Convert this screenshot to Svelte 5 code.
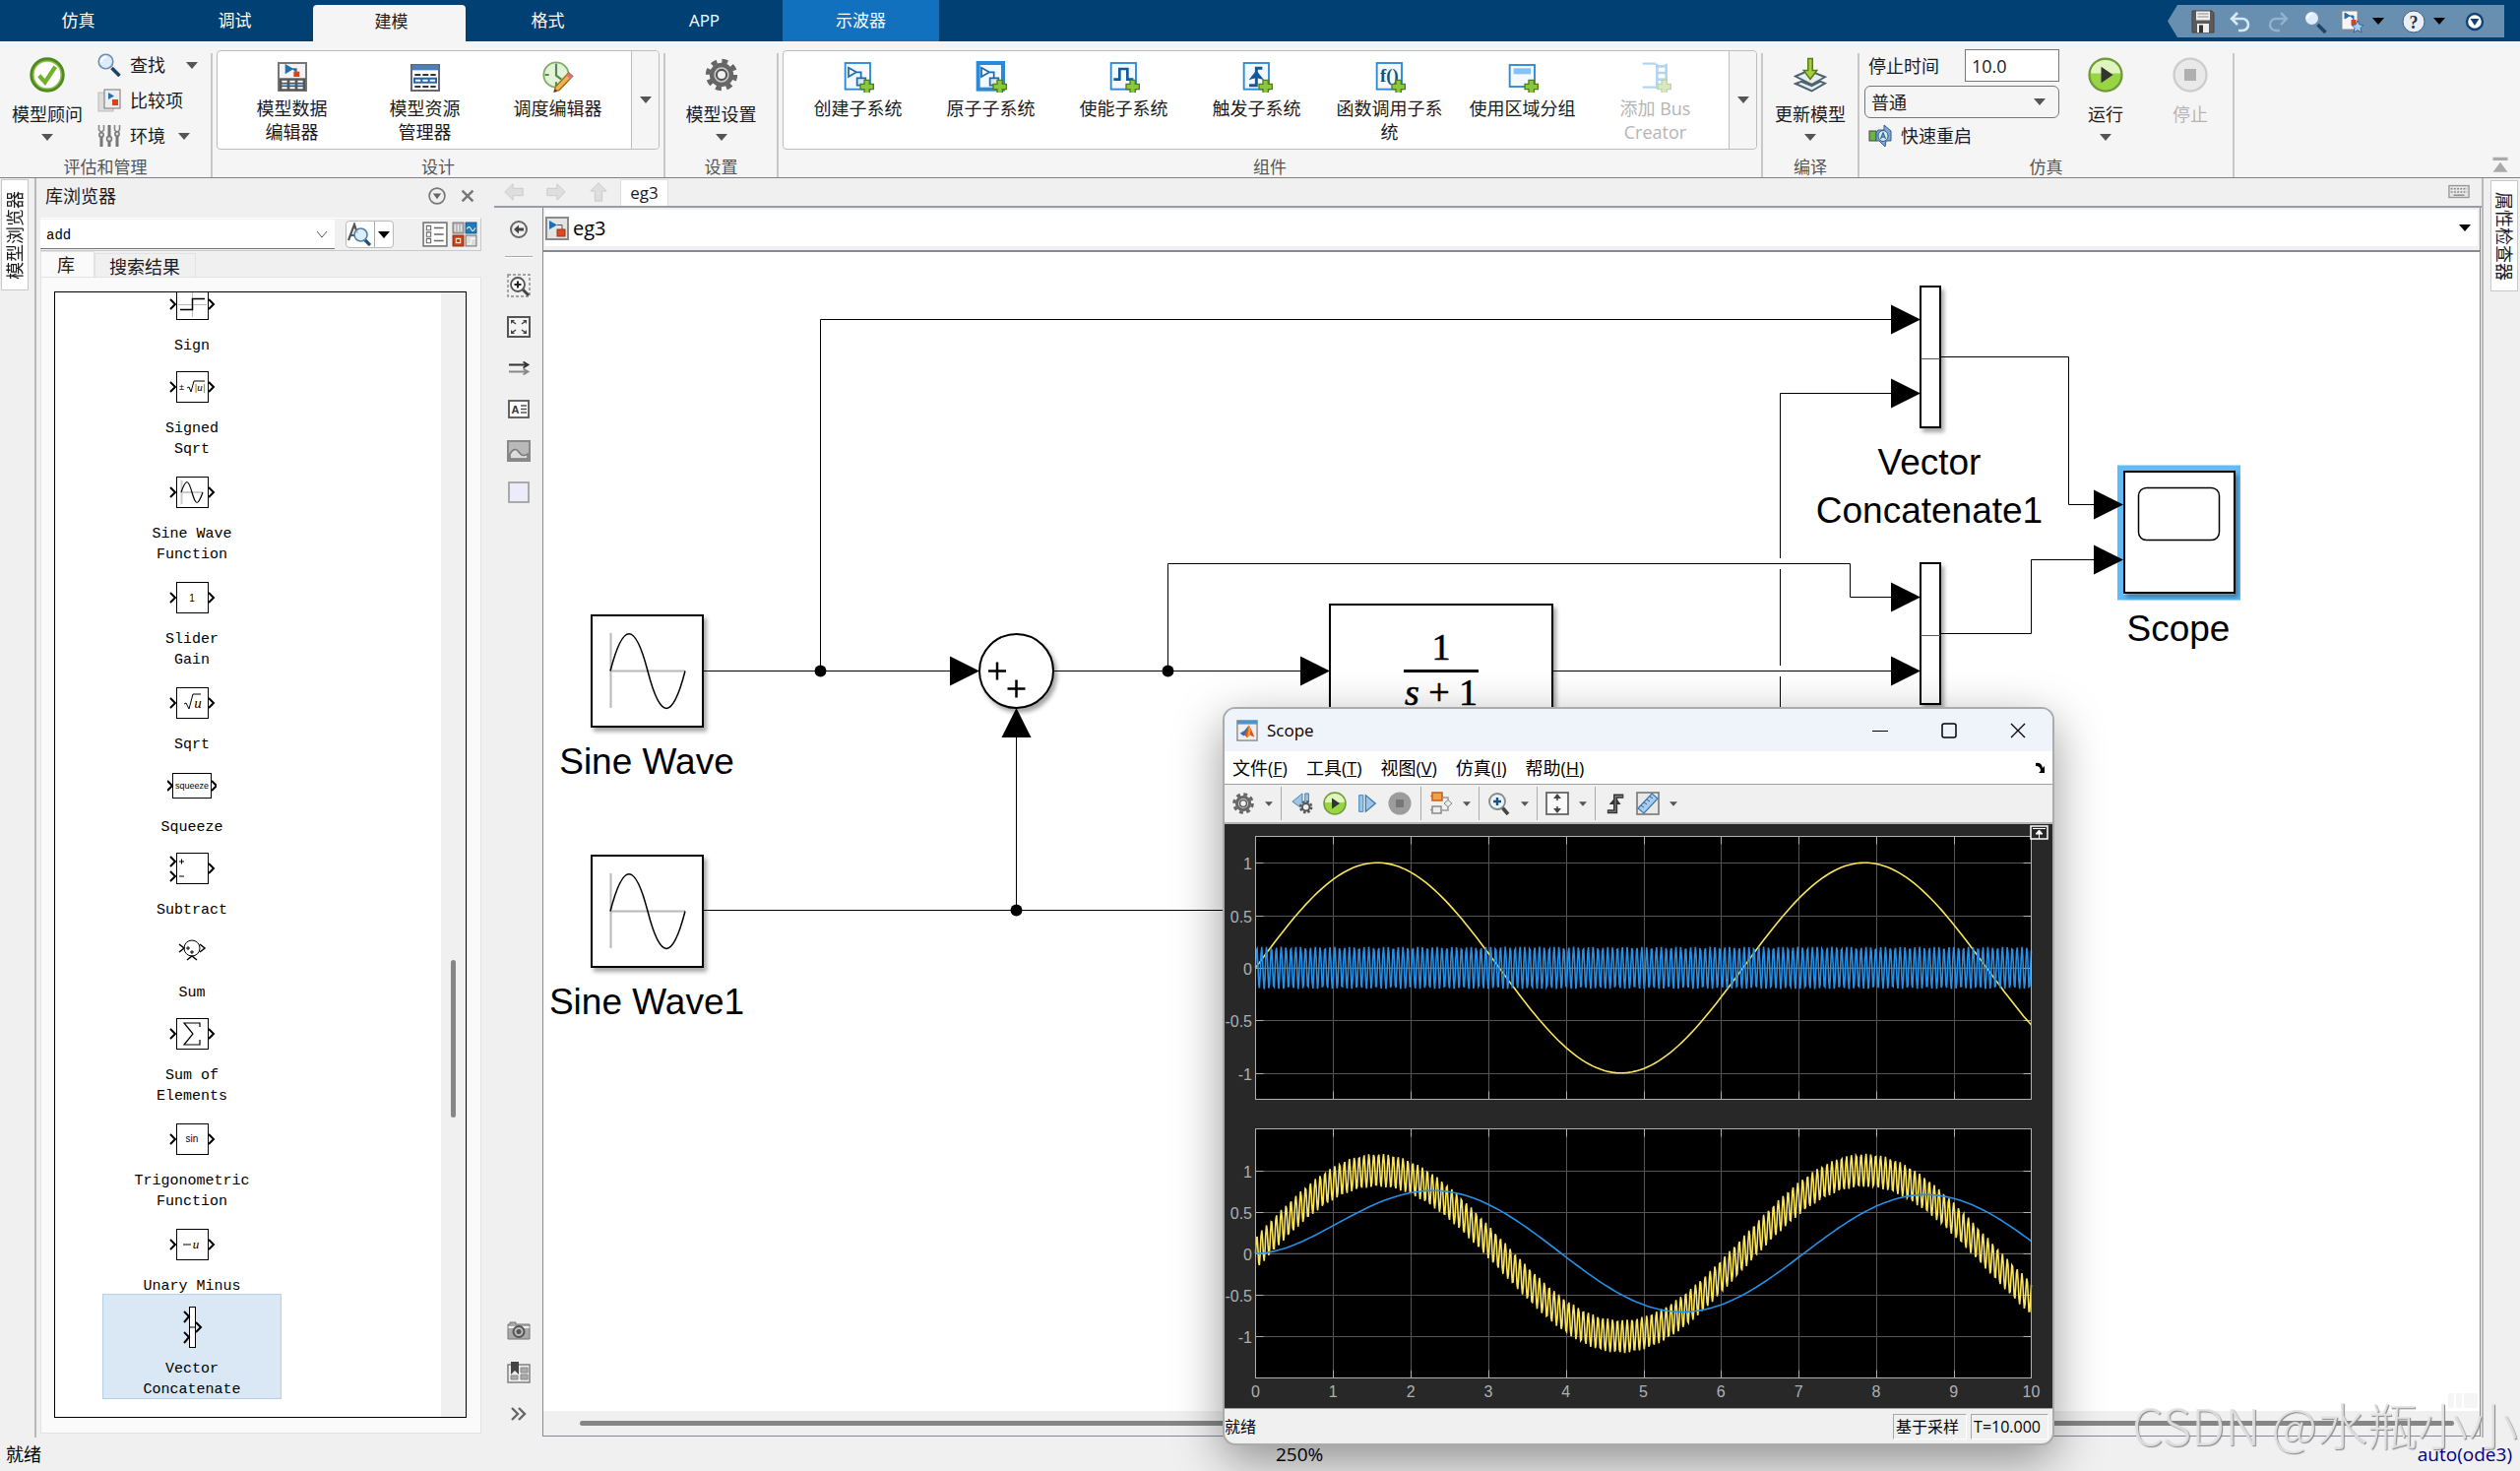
<script>
  const tabs = ["仿真", "调试", "建模", "格式", "APP", "示波器"];
  let activeTab = "建模";

  const designTools = [
    { icon: "modelData", label: "模型数据\n编辑器" },
    { icon: "modelExplorer", label: "模型资源\n管理器" },
    { icon: "schedule", label: "调度编辑器" },
  ];

  const componentTools = [
    { icon: "subsystem", label: "创建子系统" },
    { icon: "atomic", label: "原子子系统" },
    { icon: "enabled", label: "使能子系统" },
    { icon: "triggered", label: "触发子系统" },
    { icon: "fcn", label: "函数调用子系统" },
    { icon: "area", label: "使用区域分组" },
    { icon: "bus", label: "添加 Bus\nCreator", disabled: true },
  ];

  const blocks = [
    { icon: "sign", label: "Sign" },
    { icon: "signedSqrt", label: "Signed\nSqrt" },
    { icon: "sine", label: "Sine Wave\nFunction" },
    { icon: "gain", label: "Slider\nGain" },
    { icon: "sqrt", label: "Sqrt" },
    { icon: "squeeze", label: "Squeeze" },
    { icon: "subtract", label: "Subtract" },
    { icon: "sum", label: "Sum" },
    { icon: "sigma", label: "Sum of\nElements" },
    { icon: "sin", label: "Trigonometric\nFunction" },
    { icon: "minus", label: "Unary Minus" },
    { icon: "concat", label: "Vector\nConcatenate" },
  ];

  const paletteTop = [
    { icon: "zoomArea", label: "缩放" },
    { icon: "fit", label: "适应视图" },
    { icon: "signals", label: "信号" },
    { icon: "annotation", label: "注释" },
    { icon: "image", label: "图像" },
    { icon: "box", label: "区域" },
  ];
  const paletteBottom = [
    { icon: "camera", label: "截图" },
    { icon: "bookmark", label: "视图标记" },
    { icon: "more", label: "更多" },
  ];

  const menus = [
    ["文件", "F"],
    ["工具", "T"],
    ["视图", "V"],
    ["仿真", "I"],
    ["帮助", "H"],
  ];

  let searchText = "add";
  let stopTime = "10.0";
  let simMode = "普通";
  let selectedBlock = "concat";

  // scope plots: pixel geometry inside the dark figure area
  const plotLeft = 31.5;
  const plotWidth = 788;
  const plots = [
    { top: 12.5, height: 267, range: 1.25 },
    { top: 309.5, height: 253, range: 1.5 },
  ];
  const seconds = [0, 1, 2, 3, 4, 5, 6, 7, 8, 9, 10];
  const levels = [1, 0.5, 0, -0.5, -1];

  function tx(t) {
    return plotLeft + (t / 10) * plotWidth;
  }

  function vy(plot, v) {
    return plot.top + plot.height / 2 - (v / plot.range) * (plot.height / 2);
  }

  function trace(plot, fn, step) {
    const points = [];
    const count = Math.round(10 / step);
    for (let i = 0; i <= count; i++) {
      const t = i * step;
      points.push(tx(t).toFixed(1) + "," + vy(plot, fn(t)).toFixed(1));
    }
    return points.join(" ");
  }

  const slow = (t) => Math.sin(t);
  const fast = (t) => 0.2 * Math.sin(100 * t);
  const mixed = (t) => slow(t) + fast(t);
  // response of 1/(s+1)
  const filtered = (t) => (Math.sin(t) - Math.cos(t) + Math.exp(-t)) / 2;

  const traces = [
    { points: trace(plots[0], slow, 0.05), color: "#fbe55c" },
    { points: trace(plots[0], fast, 0.01), color: "#2590e6" },
    { points: trace(plots[1], mixed, 0.01), color: "#fbe55c" },
    { points: trace(plots[1], filtered, 0.05), color: "#2590e6" },
  ];
</script>

{#snippet plus()}
  <path d="M16.5 14.5h4v3h3v4h-3v3h-4v-3h-3v-4h3z" fill="#8cc63e" stroke="#4d7f1c" />
{/snippet}

{#snippet caret(color = "#555")}
  <svg class="caret" width="12" height="7" viewBox="0 0 12 7"><path d="M0 0h12L6 7z" fill={color} /></svg>
{/snippet}

{#snippet icon(name, size = 24)}
  <svg class="icon" width={size} height={size} viewBox="0 0 24 24" fill="none">
    {#if name === "advisor"}
      <circle cx="12" cy="12" r="10.6" fill="#fff" stroke="#4f8a1e" stroke-width="2.4" />
      <circle cx="12" cy="12" r="9.4" stroke="#8fc14f" stroke-width="1" />
      <path d="M6.5 12.5l4 4.5 7-10.5" stroke="#73b02c" stroke-width="2.8" />
    {:else if name === "find"}
      <path d="M14.5 15l8 8" stroke="#1f4468" stroke-width="3.6" />
      <circle cx="8.5" cy="8.5" r="7.3" fill="#dcecfa" stroke="#6d8eb0" stroke-width="1.6" />
      <path d="M4 9a5 5 0 0 1 5-5" stroke="#fff" stroke-width="2" />
    {:else if name === "compare"}
      <rect x="1" y="4" width="15" height="19" fill="#ddd" stroke="#bbb" />
      <rect x="7" y="1" width="16" height="19" fill="#eee" stroke="#777" />
      <path d="M11 4l6 3.5-6 3.5z" fill="#2370ae" />
      <rect x="15" y="11" width="6" height="6" fill="#d8421c" />
    {:else if name === "environment"}
      <path d="M4 13v10M12 1v12m0 4v6M20 12v11" stroke="#777" stroke-width="3" />
      <path d="M1.5 1v5L4 8.500 6.500 6V1M17.500 1v5l2.500 2.500L22.500 6V1" stroke="#888" stroke-width="1.6" />
      <circle cx="4" cy="11" r="2.2" fill="#ddd" stroke="#777" stroke-width="1.5" />
      <circle cx="12" cy="15" r="2.5" fill="#ddd" stroke="#777" stroke-width="1.5" />
      <circle cx="20" cy="10" r="2.2" fill="#ddd" stroke="#777" stroke-width="1.5" />
    {:else if name === "modelData"}
      <rect x="1.5" y="1.5" width="21" height="21" fill="#f4f4f4" stroke="#777" stroke-width="1.5" />
      <path d="M7 3l5 3-5 3zM12 6h3v3" fill="#2370ae" stroke="#2370ae" />
      <rect x="13" y="8" width="4.5" height="4" fill="#d8421c" />
      <rect x="2" y="13" width="20" height="9.5" fill="#555" />
      <path d="M4 15.5h16" stroke="#fff" stroke-width="1.5" stroke-dasharray="4 2" />
      <path d="M4 18h16" stroke="#7ab4ee" stroke-width="1.5" stroke-dasharray="4 2" />
      <path d="M4 20.5h16" stroke="#fff" stroke-width="1.5" stroke-dasharray="4 2" />
    {:else if name === "modelExplorer"}
      <rect x="1.5" y="3" width="21" height="19.5" fill="#fff" stroke="#667" stroke-width="1.5" />
      <rect x="2" y="3" width="20" height="4" fill="#4a7fb8" />
      <path d="M4 10.5h16M4 19.5h16" stroke="#333" stroke-width="1.5" stroke-dasharray="4.5 1.5" />
      <rect x="3" y="12.5" width="18" height="4.5" fill="#2464a8" />
      <path d="M4.5 14.8h15" stroke="#fff" stroke-width="1.5" stroke-dasharray="4 1.5" />
    {:else if name === "schedule"}
      <circle cx="10.5" cy="10.5" r="9.5" fill="#e4f3d8" stroke="#7fae68" stroke-width="1.4" />
      <path d="M10.5 2v3M10.5 16v3M2 10.5h3M10.5 4v7l4 3" stroke="#4f8a4f" stroke-width="1.6" />
      <path d="M20 9l3 2.5-10 10.5-4 1.5 1-4z" fill="#efb548" stroke="#9a6d2a" />
      <path d="M20 9l3 2.5-1.8 2-3-2.5z" fill="#e46f80" />
      <path d="M9 23.5l.6-2.2 1.8 1.4z" fill="#333" />
    {:else if name === "settings" || name === "gear"}
      <circle cx="12" cy="12" r="9.3" stroke="#666" stroke-width="3" stroke-dasharray="3.9 3.4" />
      <circle cx="12" cy="12" r="6.6" fill="#ccc" stroke="#666" stroke-width="3" />
      <circle cx="12" cy="12" r="3.4" fill="#f2f2f2" stroke="#555" stroke-width="1.4" />
    {:else if name === "subsystem" || name === "atomic"}
      <rect x="2" y="1.5" width="19" height="20" fill="#f3f9ff" stroke="#2a8ad8" stroke-width={name === "atomic" ? 3 : 1.4} />
      <path d="M4.5 5l6 3.5-6 3.5zM10.5 8.5H14V13" stroke="#1b6cb0" stroke-width="1.3" />
      <rect x="11" y="13" width="6.5" height="5.5" fill="#d6e8f8" stroke="#1b6cb0" stroke-width="1.3" />
      {@render plus()}
    {:else if name === "enabled"}
      <rect x="2" y="1.5" width="19" height="20" fill="#f3f9ff" stroke="#2a8ad8" stroke-width="1.4" />
      <path d="M4 14h4.5V6h6v8H19" stroke="#10599c" stroke-width="2" />
      {@render plus()}
    {:else if name === "triggered"}
      <rect x="2" y="1.5" width="19" height="20" fill="#f3f9ff" stroke="#2a8ad8" stroke-width="1.4" />
      <path d="M6 18.5h5.5V5.5H16" stroke="#10599c" stroke-width="2.2" />
      <path d="M11.5 8l4.5 5.5-3-.8h-3l-3 .8z" fill="#10599c" stroke="#10599c" />
      {@render plus()}
    {:else if name === "fcn"}
      <rect x="2" y="1.5" width="19" height="20" fill="#f3f9ff" stroke="#2a8ad8" stroke-width="1.4" />
      <text x="11.5" y="16" class="glyph" font-size="14" font-weight="bold" fill="#174f80">f()</text>
      {@render plus()}
    {:else if name === "area"}
      <rect x="2" y="3" width="19" height="16.5" fill="#f3f9ff" stroke="#2a8ad8" stroke-width="1.4" />
      <rect x="5" y="5.5" width="13" height="4.5" fill="#85c2fa" />
      {@render plus()}
    {:else if name === "bus"}
      <path d="M2 2h10M2 20h10" stroke="#2a8ad8" stroke-width="1.6" />
      <path d="M13 2v19M20 2v19M13 4h7M13 9h7M13 14h7M13 19h7" stroke="#2a8ad8" stroke-width="2" />
      {@render plus()}
    {:else if name === "update"}
      <path d="M2 13l9-4 11 4.5-9 5zM2 18l4-1.5 7 3 6-3 3 1.2-9 5.3z" fill="#e8eef0" stroke="#4d6470" stroke-width="1.3" />
      <path d="M10.5 1h3v8h3L12 15 7.500 9h3z" fill="#a5cf3c" stroke="#557f16" />
    {:else if name === "run"}
      <circle cx="12" cy="12" r="11" fill="#98d444" stroke="#6f9a3a" stroke-width="1.5" />
      <path d="M2 11a10 9 0 0 1 20 0z" fill="#e0f4c0" />
      <path d="M9 6.5l8 5.5-8 5.5z" fill="#333" />
    {:else if name === "stop"}
      <circle cx="12" cy="12" r="11" fill="#e9e9e9" stroke="#ccc" stroke-width="1.5" />
      <rect x="8" y="8" width="8" height="8" fill="#b0b0b0" />
    {:else if name === "stopDark"}
      <circle cx="12" cy="12" r="11.5" fill="#9c9c9c" />
      <rect x="8" y="8" width="8" height="8" fill="#777" />
    {:else if name === "restart"}
      <rect x="1" y="7" width="7" height="10" fill="#6db543" stroke="#444" />
      <path d="M10 6h6v-5l7 6v10h-5l-1 6-6-6H8V9z" fill="#7fa9d0" stroke="#2c5c8c" />
      <ellipse cx="15" cy="12" rx="5" ry="5.5" fill="#dce9f5" stroke="#2c5c8c" />
      <path d="M12.500 15l2.500-6 2.500 6M13 13h4" stroke="#33689a" stroke-width="1.3" />
    {:else if name === "save"}
      <path d="M1 1h20l2 2v20H1z" fill="#5b5b5b" stroke="#444" />
      <rect x="5" y="1.5" width="14" height="9" fill="#f0f0f0" />
      <path d="M6.5 4h11M6.5 7h11" stroke="#888" />
      <rect x="6" y="14" width="12" height="9" fill="#eee" />
      <rect x="8" y="15.5" width="4" height="7.5" fill="#333" />
    {:else if name === "undo"}
      <path d="M9 3L3 9l6 6M4 9h10a6 6 0 0 1 0 12h-4" stroke="#d7e8f6" stroke-width="2.6" />
    {:else if name === "redo"}
      <path d="M15 3l6 6-6 6M20 9H10a6 6 0 0 0 0 12h4" stroke="#91b3d0" stroke-width="2.4" />
    {:else if name === "modelStar"}
      <rect x="1" y="1" width="16" height="19" fill="#f6f6f6" stroke="#888" />
      <path d="M4 3l5 3-5 3zM9 6h4v4" fill="#2370ae" stroke="#2370ae" />
      <rect x="10.5" y="10" width="5" height="5" fill="#d8421c" />
      <path d="M17 11l2 4 4 .5-3 3 1 4.5-4-2.3-4 2.3 1-4.5-3-3 4-.5z" fill="#a9cdf0" stroke="#38648c" />
    {:else if name === "help"}
      <circle cx="12" cy="12" r="11" fill="#e9eff5" stroke="#3c5d80" />
      <text x="12" y="18.5" class="glyph" font-size="18" font-weight="bold" fill="#1c3650">?</text>
    {:else if name === "dropCircle"}
      <circle cx="12" cy="12" r="8" fill="#fff" stroke="#10427a" stroke-width="2.4" />
      <path d="M7.5 9h9L12 16z" fill="#10427a" />
    {:else if name === "panelMenu"}
      <circle cx="12" cy="12" r="9.5" stroke="#777" stroke-width="2" />
      <path d="M7 9h10l-5 7z" fill="#666" />
    {:else if name === "close"}
      <path d="M5.5 5.5l13 13M18.5 5.5l-13 13" stroke="#777" stroke-width="3" />
    {:else if name === "collapse"}
      <path d="M3 2h18v4H3zM12 8l9 12H3z" fill="#aaa" />
    {:else if name === "navLeft"}
      <path d="M2 12l9-9v5h11v8H11v5z" fill="#dedede" stroke="#c8c8c8" />
    {:else if name === "navRight"}
      <path d="M22 12l-9-9v5H2v8h11v5z" fill="#dedede" stroke="#c8c8c8" />
    {:else if name === "navUp"}
      <path d="M12 2l9 9h-5v11H8V11H3z" fill="#dedede" stroke="#c8c8c8" />
    {:else if name === "keyboard"}
      <rect x="1" y="5" width="22" height="13" fill="#e6e6e6" stroke="#999" stroke-width="1.5" />
      <path d="M3 8.5h18M3 12h18" stroke="#888" stroke-width="1.5" stroke-dasharray="2 1.5" />
      <path d="M6 15.5h12" stroke="#888" stroke-width="1.5" />
    {:else if name === "model"}
      <rect x="1" y="1" width="22" height="22" fill="#e4e4e4" stroke="#8a8a8a" stroke-width="2" />
      <path d="M4 4l8 4.5L4 13z" fill="#1c6fb4" />
      <path d="M12 8.5h5V14" stroke="#555" />
      <rect x="12" y="13" width="8" height="7" fill="#dd4a1f" stroke="#a33210" />
    {:else if name === "findText"}
      <path d="M1 18L7 2l3 9M3 13h5" stroke="#555" stroke-width="2.2" />
      <path d="M17 17l6 6" stroke="#24507a" stroke-width="3.2" />
      <circle cx="13.5" cy="12.5" r="6.5" fill="#d5e8fa" fill-opacity="0.8" stroke="#4a7fb0" stroke-width="1.6" />
    {:else if name === "listView"}
      <rect x="1" y="1" width="22" height="22" fill="#fff" stroke="#777" stroke-width="1.5" />
      <path d="M4 4h4v4H4zM4 10h4v4H4zM4 16h4v4H4z" stroke="#666" />
      <path d="M11 6h9M11 12h9M11 18h9" stroke="#666" stroke-width="1.5" />
    {:else if name === "gridView"}
      <rect x="1" y="1" width="10" height="10" fill="#bbb" stroke="#777" />
      <rect x="13" y="1" width="10" height="10" fill="#1e7bbf" stroke="#155a8c" />
      <rect x="1" y="13" width="10" height="10" fill="#c8421c" stroke="#8c2c10" />
      <rect x="13" y="13" width="10" height="10" fill="#ddd" stroke="#777" />
      <path d="M3 9V3m3 6V3m3 6V3" stroke="#eee" />
      <path d="M14 7q2.5-4 4 0t4-1M15 21h3v-5h4" stroke="#fff" />
      <rect x="4" y="16" width="4" height="4" stroke="#fff" />
    {:else if name === "back"}
      <circle cx="12" cy="12" r="8" stroke="#666" stroke-width="2" />
      <path d="M7 12l5-4.5v3h5v3h-5v3z" fill="#444" />
    {:else if name === "zoomArea"}
      <rect x="1" y="1" width="22" height="22" stroke="#888" stroke-width="1.4" stroke-dasharray="3 2" />
      <path d="M16 16l6 6" stroke="#444" stroke-width="3" />
      <circle cx="11" cy="11" r="7" fill="#fafafa" stroke="#555" stroke-width="1.8" />
      <path d="M7.5 11h7M11 7.5v7" stroke="#222" stroke-width="2" />
    {:else if name === "fit"}
      <rect x="1" y="2" width="22" height="20" fill="#f4f4f4" stroke="#555" stroke-width="2" />
      <path d="M4 9V5h4zM20 9V5h-4zM4 15v4h4zM20 15v4h-4z" fill="#444" />
      <path d="M5 6l4 3M19 6l-4 3M5 18l4-3M19 18l-4-3" stroke="#444" stroke-width="1.5" />
    {:else if name === "signals"}
      <path d="M2 8.500h19M16.500 5.500l5 3-5 3" stroke="#333" stroke-width="1.8" />
      <path d="M2 15.500h19M16.500 12.500l5 3-5 3" stroke="#888" stroke-width="1.8" />
    {:else if name === "annotation"}
      <rect x="2" y="3" width="20" height="17" fill="#fff" stroke="#555" stroke-width="1.8" />
      <text x="8.5" y="15.5" class="glyph sans" font-size="11" font-weight="bold" fill="#333">A</text>
      <path d="M14 8h6M14 11.5h6M14 15h6" stroke="#555" stroke-width="1.4" />
    {:else if name === "image"}
      <rect x="1" y="2" width="22" height="20" fill="#b9b9b9" stroke="#888" stroke-width="2" />
      <path d="M3 15q5-8 9-2t9 2v5H3z" fill="#dcdcdc" stroke="#777" stroke-width="1.5" />
    {:else if name === "box"}
      <rect x="2" y="2" width="20" height="20" fill="#ebebfa" stroke="#999" stroke-width="1.6" />
    {:else if name === "camera"}
      <path d="M3 3h6v2h14v15H1V5h2z" fill="#aaa" stroke="#777" />
      <path d="M1.5 8h21" stroke="#eee" stroke-width="2" />
      <circle cx="12" cy="12.5" r="5.5" fill="#bbb" stroke="#555" stroke-width="2" />
      <circle cx="12" cy="12.5" r="2.5" fill="#555" />
    {:else if name === "bookmark"}
      <rect x="1" y="4" width="22" height="18" fill="#eee" stroke="#888" stroke-width="1.6" />
      <path d="M14 7h7v5h-7zM14 14h7v5h-7zM4 15h7v4H4z" fill="#aaa" stroke="#888" />
      <path d="M4 1h8v13l-4-4-4 4z" fill="#444" />
    {:else if name === "more"}
      <path d="M5 6l6 6-6 6M12 6l6 6-6 6" stroke="#666" stroke-width="2.4" />
    {:else if name === "matlab"}
      <rect x="1" y="1" width="22" height="22" fill="#eee" stroke="#888" stroke-width="1.5" />
      <rect x="1" y="1" width="22" height="4" fill="#4f94c8" />
      <path d="M4 15l5-3 5-6-3 10-3 2z" fill="#2c6fb3" />
      <path d="M9 17l5-11 3 6 3 7-5-2-3 3z" fill="#e0521c" />
      <path d="M14 6l2 5-1 6-3 3z" fill="#f39b32" />
    {:else if name === "restore"}
      <path d="M12 1L1 10l11 8z" fill="#9cc4e8" stroke="#3c78ac" />
      <path d="M15 1h4v10h-4z" fill="#9cc4e8" stroke="#3c78ac" />
      <circle cx="16" cy="16" r="6" fill="#ccc" stroke="#555" stroke-width="2.6" stroke-dasharray="2.6 2.1" />
      <circle cx="16" cy="16" r="4" fill="#eee" stroke="#555" stroke-width="2" />
    {:else if name === "step"}
      <path d="M2 2h5v20H2z" fill="#9cc4e8" stroke="#33719f" />
      <path d="M10 2l12 10-12 10z" fill="#9cc4e8" stroke="#33719f" stroke-width="1.4" />
    {:else if name === "highlight"}
      <path d="M1 4.500h13M14 6h5v3M19 15v4h-6M1 18.500h2" stroke="#999" stroke-width="1.5" />
      <rect x="3" y="1" width="10" height="8" fill="#f4a04a" stroke="#c95d12" stroke-width="1.5" />
      <rect x="3" y="15" width="9" height="7" fill="#eee" stroke="#888" stroke-width="1.5" />
      <path d="M15 12l4-3.5 4 3.5-4 3.5z" fill="#eee" stroke="#888" />
    {:else if name === "zoomIn"}
      <path d="M15 16l6 7" stroke="#444" stroke-width="3.6" />
      <circle cx="10" cy="10" r="8" fill="#eaf3fa" stroke="#888" stroke-width="1.8" />
      <path d="M6 10h8M10 6v8" stroke="#1d4f80" stroke-width="2.4" />
    {:else if name === "fitY"}
      <rect x="1" y="1" width="22" height="22" fill="#fafafa" stroke="#555" stroke-width="1.6" />
      <path d="M12 2l4 5H8zM12 22l4-5H8z" fill="#444" />
      <path d="M12 6v3M12 15v3" stroke="#444" stroke-width="1.6" />
    {:else if name === "trigger"}
      <path d="M2 21h9V4h9" stroke="#333" stroke-width="4.5" />
      <path d="M11 5l6 8H4z" fill="#333" />
      <path d="M3 21h8V4h8" stroke="#888" stroke-width="1.2" />
    {:else if name === "ruler"}
      <rect x="1" y="1" width="22" height="22" fill="#e8e8e8" stroke="#777" stroke-width="1.6" />
      <path d="M16 2l6 5L8 22l-6-5z" fill="#a8cdee" stroke="#3c78ac" stroke-width="1.2" />
      <path d="M14 5l3 2M11 8l3 2M8 11l3 2M5 14l3 2" stroke="#33618c" />
    {/if}
  </svg>
{/snippet}

{#snippet blockIcon(name)}
  <svg width="50" height="46" viewBox="0 0 50 46" fill="none" stroke="#000">
    {#if name === "sum"}
      <circle cx="25" cy="20" r="8" />
      <path d="M12 16l5 4-5 4M33 16l5 4-5 4M20 32l5-4 5 4" stroke-width="1.5" />
      <path d="M19 20h4M21 18v4M23 24h4M25 22v4" />
    {:else if name === "concat"}
      <rect x="22.5" y="2.5" width="6" height="41" fill="#fff" />
      <path d="M22 23h7" />
      <path d="M17 7l5 5-5 6M17 28l5 5-5 6M29 18l5 5-5 5" stroke-width="2" />
    {:else if name === "squeeze"}
      <rect x="5.5" y="10.5" width="39" height="25" fill="#fff" />
      <path d="M0 18l5 5-5 5M45 18l5 5-5 5" stroke-width="2" />
      <text x="25" y="26" font-size="9">squeeze</text>
    {:else}
      <rect x="9.5" y="7.5" width="32" height="31" fill="#fff" />
      {#if name === "subtract"}
        <path d="M3 11l5 5-5 5M3 26l5 5-5 5M42 18l5 5-5 5" stroke-width="2" />
        <path d="M12 16h5M14.5 13.5v5M12 31h5" />
      {:else}
        <path d="M3 18l5 5-5 5M42 18l5 5-5 5" stroke-width="2" />
      {/if}
      {#if name === "sign"}
        <path d="M11 23.5h29M25.5 10v26" stroke="#bbb" />
        <path d="M13 28.5h12.5v-11H38" stroke-width="1.5" />
      {:else if name === "signedSqrt"}
        <text x="14.5" y="26" font-size="9">±</text>
        <path d="M20 24l2-1 2 5 3-11h11" />
        <text x="33" y="27" class="math" font-size="11">|u|</text>
      {:else if name === "sine"}
        <path d="M14.5 11v24M14 23h22" stroke="#ccc" stroke-width="2" />
        <path d="M14 23C19 9 21 9 25 23S31 37 36 23" stroke-width="1.2" />
      {:else if name === "gain"}
        <text x="25" y="27" font-size="10">1</text>
      {:else if name === "sqrt"}
        <path d="M17 24l2-1 3 6 4-15h8" />
        <text x="31" y="28" class="math" font-size="15">u</text>
      {:else if name === "sigma"}
        <path d="M33 16v-4H17l9 11-9 11h16v-5" stroke-width="1.2" />
      {:else if name === "sin"}
        <text x="25" y="26" font-size="10">sin</text>
      {:else if name === "minus"}
        <path d="M16 23h8" />
        <text x="29" y="27" class="math" font-size="13">u</text>
      {/if}
    {/if}
  </svg>
{/snippet}

{#snippet gallery(tools, menuLabel)}
  <div class="gallery">
    <div class="gallery-items">
      {#each tools as tool}
        <button class="tool" disabled={tool.disabled}>
          {@render icon(tool.icon, 32)}
          <span>{tool.label}</span>
        </button>
      {/each}
    </div>
    <button class="gallery-more" aria-label={menuLabel}>{@render caret()}</button>
  </div>
{/snippet}

{#snippet sineBlock(y)}
  <g transform="translate(49 {y})">
    <rect width="113" height="113" class="node" />
    <path d="M19.5 18v76M19 56.5h76" stroke="#b8b8b8" stroke-width="2" />
    <path d="M19 56.500C32 6 44 6 57 56.500S82 107 95 56.500" stroke-width="1.5" />
  </g>
{/snippet}

{#snippet muxBlock(y)}
  <g transform="translate(1399 {y})">
    <rect width="20" height="143" class="node" />
    <path d="M0 73.5h20" stroke="#555" />
  </g>
{/snippet}

<div class="app">
  <header class="topbar">
    <nav>
      {#each tabs as tab}
        <button
          class="tab"
          class:active={tab === activeTab}
          class:context={tab === "示波器"}
          on:click={() => (activeTab = tab)}>{tab}</button
        >
      {/each}
    </nav>
    <div class="quick">
      <button aria-label="保存">{@render icon("save")}</button>
      <button aria-label="撤销">{@render icon("undo")}</button>
      <button aria-label="重做">{@render icon("redo")}</button>
      <button aria-label="搜索">{@render icon("find")}</button>
      <button class="pair" aria-label="收藏">{@render icon("modelStar")}{@render caret("#000")}</button>
      <button class="pair" aria-label="帮助">{@render icon("help")}{@render caret("#000")}</button>
      <button aria-label="选项">{@render icon("dropCircle")}</button>
    </div>
  </header>

  <div class="ribbon">
    <section>
      <div class="section-body">
        <button class="big wide">
          {@render icon("advisor", 36)}<span>模型顾问</span>{@render caret()}
        </button>
        <div class="small-tools">
          <button class="small find">{@render icon("find")}<span>查找</span>{@render caret()}</button>
          <button class="small">{@render icon("compare")}<span>比较项</span></button>
          <button class="small">{@render icon("environment")}<span>环境</span>{@render caret()}</button>
        </div>
      </div>
      <h2>评估和管理</h2>
    </section>
    <div class="sep"></div>
    <section>
      <div class="section-body padded">{@render gallery(designTools, "更多设计工具")}</div>
      <h2>设计</h2>
    </section>
    <div class="sep"></div>
    <section>
      <div class="section-body">
        <button class="big settings">
          {@render icon("settings", 36)}<span>模型设置</span>{@render caret()}
        </button>
      </div>
      <h2>设置</h2>
    </section>
    <div class="sep"></div>
    <section>
      <div class="section-body padded">{@render gallery(componentTools, "更多组件")}</div>
      <h2>组件</h2>
    </section>
    <div class="sep"></div>
    <section>
      <div class="section-body">
        <button class="big wide">
          {@render icon("update", 36)}<span>更新模型</span>{@render caret()}
        </button>
      </div>
      <h2>编译</h2>
    </section>
    <div class="sep"></div>
    <section>
      <div class="section-body">
        <div class="sim-form">
          <div class="stop-time">
            <label for="stop-time">停止时间</label>
            <input id="stop-time" type="text" bind:value={stopTime} />
          </div>
          <div class="mode">
            <select aria-label="仿真模式" bind:value={simMode}>
              <option>普通</option>
              <option>加速</option>
            </select>
            {@render caret()}
          </div>
          <button class="small">{@render icon("restart")}<span>快速重启</span></button>
        </div>
        <button class="big">{@render icon("run", 36)}<span>运行</span>{@render caret()}</button>
        <button class="big" disabled>{@render icon("stop", 36)}<span>停止</span></button>
      </div>
      <h2>仿真</h2>
    </section>
    <div class="sep"></div>
    <button class="collapse" aria-label="折叠工具条">{@render icon("collapse", 20)}</button>
  </div>

  <div class="workspace">
    <aside class="rail left">
      <button><span>模型浏览器</span></button>
    </aside>

    <aside class="library">
      <div class="library-head">
        <h3>库浏览器</h3>
        <button aria-label="面板菜单">{@render icon("panelMenu", 20)}</button>
        <button aria-label="关闭面板">{@render icon("close", 20)}</button>
      </div>
      <div class="search-row">
        <div class="combo">
          <input type="text" aria-label="搜索模块" bind:value={searchText} />
          <svg width="12" height="8" viewBox="0 0 12 8" fill="none"><path d="M1 1l5 6 5-6" stroke="#555" /></svg>
        </div>
        <button class="search-button" aria-label="查找模块">
          {@render icon("findText")}<i></i>{@render caret("#000")}
        </button>
        <button class="view" aria-label="列表视图">{@render icon("listView", 26)}</button>
        <button class="view" aria-label="网格视图">{@render icon("gridView", 26)}</button>
      </div>
      <div class="library-tabs">
        <button class="current">库</button>
        <button>搜索结果</button>
      </div>
      <div class="library-panel">
        <div class="list">
          <div class="blocks">
            {#each blocks as block}
              <button
                class="block"
                class:tall={block.label.includes("\n")}
                class:selected={block.icon === selectedBlock}
                on:click={() => (selectedBlock = block.icon)}
              >
                {@render blockIcon(block.icon)}
                <span>{block.label}</span>
              </button>
            {/each}
          </div>
          <div class="vscroll"><div class="vthumb"></div></div>
        </div>
      </div>
    </aside>

    <main class="editor">
      <div class="nav-row">
        <button aria-label="后退">{@render icon("navLeft", 22)}</button>
        <button aria-label="前进">{@render icon("navRight", 22)}</button>
        <button aria-label="上一级">{@render icon("navUp", 22)}</button>
        <button class="file-tab">eg3</button>
        <button class="keyboard" aria-label="键盘快捷方式">{@render icon("keyboard", 22)}</button>
      </div>
      <div class="editor-row">
        <div class="palette">
          <button class="first" aria-label="隐藏">{@render icon("back")}</button>
          <hr />
          {#each paletteTop as item}
            <button aria-label={item.label}>{@render icon(item.icon)}</button>
          {/each}
          <div class="spacer"></div>
          {#each paletteBottom as item}
            <button aria-label={item.label}>{@render icon(item.icon)}</button>
          {/each}
        </div>

        <div class="sheet">
          <div class="crumb">
            <div class="crumb-inner">
              {@render icon("model")}
              <span>eg3</span>
              {@render caret("#000")}
            </div>
          </div>
          <div class="canvas">
            <svg class="diagram" width="100%" height="100%" fill="none" stroke="#000">
              <!-- wires -->
              <path d="M163 425.5H413M281.5 425.5V68.5H1369M519 425.5H769M634.5 425.5V316.5H1327.5V350.5H1369" />
              <path d="M1025 425.5H1369M163 668.5H800M480.5 668.5V493M1369 143.5H1256.5V311M1256.5 322V420M1256.5 431V480" />
              <path d="M1420 106.5H1549.5V256.5H1575M1420 387.5H1511.5V312.5H1575" />
              <g fill="#000" stroke="none">
                <circle cx="281.5" cy="425.5" r="6" />
                <circle cx="634.5" cy="425.5" r="6" />
                <circle cx="480.5" cy="668.5" r="6" />
                <path d="M413 410.5l30 15-30 15zM769 410.5l30 15-30 15zM465.5 493l15-30 15 30z" />
                <path d="M1369 53.5l30 15-30 15zM1369 128.5l30 15-30 15zM1369 335.5l30 15-30 15zM1369 410.5l30 15-30 15z" />
              </g>
              {@render sineBlock(369)}
              {@render sineBlock(613)}
              <circle cx="480.5" cy="425.5" r="37.5" class="node" />
              <path d="M452 425.5h18M461 416.5v18M471.5 443.5h18M480.5 434.5v18" stroke-width="2.5" />
              <rect x="799" y="358" width="226" height="136" class="node" />
              <path d="M874 425.5h76" stroke-width="3" />
              {@render muxBlock(35)}
              {@render muxBlock(316)}
              <rect x="1602" y="219.5" width="119" height="131" stroke="#5ebcfb" stroke-width="6" />
              <rect x="1606" y="223" width="112" height="123" class="node" />
              <rect x="1620.5" y="239.5" width="82" height="53" rx="8" stroke-width="1.5" />
              <path d="M1575 241.5l30 15-30 15zM1575 297.5l30 15-30 15z" fill="#000" stroke="none" />
              <g class="label">
                <text x="105" y="530">Sine Wave</text>
                <text x="105" y="774">Sine Wave1</text>
                <text x="1408" y="226">Vector</text>
                <text x="1408" y="275">Concatenate1</text>
                <text x="1661" y="395">Scope</text>
              </g>
              <g class="label formula">
                <text x="912" y="414">1</text>
                <text x="912" y="460"><tspan font-style="italic">s</tspan> + 1</text>
              </g>
            </svg>
            <div class="grips"><i></i><i></i><i></i></div>
          </div>
          <div class="hscroll"><div class="hthumb"></div></div>

          <div class="scope">
            <div class="titlebar">
              {@render icon("matlab", 22)}
              <span>Scope</span>
              <button aria-label="最小化"><svg width="16" height="16"><path d="M0 8.5h16" stroke="#000" /></svg></button>
              <button aria-label="最大化"
                ><svg width="16" height="16"><rect x="1" y="1" width="14" height="14" rx="2" fill="none" stroke="#000" stroke-width="1.5" /></svg></button
              >
              <button aria-label="关闭"><svg width="16" height="16"><path d="M1 1l14 14M15 1L1 15" stroke="#000" stroke-width="1.3" /></svg></button>
            </div>
            <div class="menubar">
              {#each menus as [name, key]}
                <button>{name}(<u>{key}</u>)</button>
              {/each}
              <svg class="dock" width="12" height="12" viewBox="0 0 12 12"><path d="M1 1q6-1 7 5l2-2v7H4l2-2Q6 4 1 4z" fill="#000" /></svg>
            </div>
            <div class="toolbar">
              <button aria-label="配置">{@render icon("gear")}{@render caret()}</button>
              <i></i>
              <button aria-label="后退">{@render icon("restore", 22)}</button>
              <button aria-label="运行仿真">{@render icon("run", 24)}</button>
              <button aria-label="步进">{@render icon("step", 20)}</button>
              <button aria-label="停止仿真">{@render icon("stopDark", 24)}</button>
              <i></i>
              <button aria-label="突出显示">{@render icon("highlight")}{@render caret()}</button>
              <i></i>
              <button aria-label="放大">{@render icon("zoomIn")}{@render caret()}</button>
              <i></i>
              <button aria-label="缩放坐标轴">{@render icon("fitY")}{@render caret()}</button>
              <i></i>
              <button aria-label="触发器">{@render icon("trigger", 22)}</button>
              <button aria-label="测量">{@render icon("ruler")}{@render caret()}</button>
            </div>
            <svg class="figure" width="841" height="593" viewBox="0 0 841 593" fill="none">
              {#each plots as plot}
                <rect x={plotLeft} y={plot.top} width={plotWidth} height={plot.height} fill="#000" />
                {#each seconds.slice(1, 10) as t}
                  <path d="M{Math.round(tx(t)) + 0.5} {plot.top}v{plot.height}" stroke="#555" />
                  <path d="M{Math.round(tx(t)) + 0.5} {plot.top}v8m0 {plot.height - 16}v8" stroke="#b0b0b0" />
                {/each}
                {#each levels as v}
                  <path d="M{plotLeft} {Math.round(vy(plot, v)) + 0.5}h{plotWidth}" stroke="#555" />
                  <path d="M{plotLeft} {Math.round(vy(plot, v)) + 0.5}h8m{plotWidth - 16} 0h8" stroke="#b0b0b0" />
                  <text x="28" y={Math.round(vy(plot, v)) + 7} text-anchor="end">{v}</text>
                {/each}
              {/each}
              {#each seconds as t}
                <text x={tx(t)} y="582" text-anchor="middle">{t}</text>
              {/each}
              {#each traces as line}
                <polyline points={line.points} stroke={line.color} stroke-width="1.6" />
              {/each}
              {#each plots as plot}
                <path d="M{plotLeft} {plot.top + plot.height / 2}h{plotWidth}" stroke="#999" stroke-opacity="0.35" />
                <rect x={plotLeft} y={plot.top} width={plotWidth} height={plot.height} stroke="#b0b0b0" />
              {/each}
              <rect x="819" y="2" width="17" height="13" fill="#282828" stroke="#fff" stroke-width="1.5" />
              <path d="M821 4.5h13M827.5 7v8M824 10l3.5-4 3.5 4z" fill="#fff" stroke="#fff" />
            </svg>
            <div class="scope-status">
              <span>就绪</span>
              <span class="cell">基于采样</span>
              <span class="cell">T=10.000</span>
            </div>
          </div>
        </div>
      </div>
    </main>

    <aside class="rail right">
      <button><span>属性检查器</span></button>
    </aside>
  </div>

  <footer>
    <span>就绪</span>
    <div class="solver">
      <span>250%</span>
      <a href="#solver">auto(ode3)</a>
    </div>
  </footer>

  <div class="watermark">CSDN @水瓶小小</div>
</div>

<style>
  :global(body) {
    margin: 0;
    background: #f0f0f0;
  }

  .app {
    position: relative;
    display: flex;
    flex-direction: column;
    height: 100vh;
    overflow: hidden;
    background: #f0f0f0;
    color: #1a1a1a;
    font-family: "Open Sans", "Noto Sans CJK SC", sans-serif;
    font-size: 18px;
    line-height: 24px;
  }

  button {
    display: flex;
    align-items: center;
    justify-content: center;
    padding: 0;
    border: none;
    background: none;
    color: inherit;
    font: inherit;
  }

  svg {
    display: block;
    flex: none;
  }

  h2,
  h3 {
    margin: 0;
    font-weight: 400;
  }

  .glyph {
    font-family: "Liberation Serif", serif;
    text-anchor: middle;
  }

  .glyph.sans {
    font-family: "Liberation Sans", sans-serif;
  }

  /* top tabs */
  .topbar {
    display: flex;
    justify-content: space-between;
    height: 42px;
    background: #004073;
  }

  nav {
    display: flex;
    align-items: flex-end;
  }

  .tab {
    width: 159px;
    height: 42px;
    color: #fff;
    font-size: 17px;
  }

  .tab.active {
    width: 155px;
    height: 37px;
    margin-right: 4px;
    padding: 0 0 4px 4px;
    box-sizing: border-box;
    border-radius: 4px 4px 0 0;
    background: #f5f5f5;
    color: #1a1a1a;
  }

  .tab.context {
    background: #1171be;
  }

  .quick {
    display: flex;
    align-items: center;
    gap: 14px;
    height: 33px;
    margin: 5px 16px 0 0;
    padding: 0 18px 0 24px;
    background: #688fb0;
    clip-path: polygon(0 50%, 10px 0, 100% 0, 100% 100%, 10px 100%);
  }

  .quick .pair {
    gap: 8px;
    margin-right: 4px;
  }

  /* ribbon */
  .ribbon {
    display: flex;
    height: 138px;
    border-bottom: 1px solid #808080;
    background: #f5f5f5;
  }

  section {
    display: flex;
    flex-direction: column;
  }

  .section-body {
    display: flex;
    height: 118px;
  }

  .section-body.padded {
    padding: 0 4px;
  }

  h2 {
    color: #555;
    font-size: 17px;
    line-height: 20px;
    text-align: center;
  }

  .sep {
    width: 2px;
    margin-top: 12px;
    background: #c8c8c8;
  }

  .big {
    flex-direction: column;
    justify-content: flex-start;
    width: 86px;
    padding-top: 16px;
  }

  .big.wide {
    width: 96px;
  }

  .big.settings {
    width: 113px;
  }

  .big span {
    margin: 10px 0 8px;
  }

  button:disabled {
    color: #b5b5b5;
  }

  .small-tools {
    display: flex;
    flex-direction: column;
    align-items: flex-start;
    width: 115px;
    padding: 6px 0 0 3px;
  }

  .small {
    gap: 9px;
    height: 36px;
  }

  .small .caret {
    margin-left: 4px;
  }

  .small.find .caret {
    margin-left: 12px;
  }

  .gallery {
    display: flex;
    height: 101px;
    margin-top: 9px;
    box-sizing: border-box;
    border: 1px solid #bdbdbd;
    border-radius: 4px;
    background: #fff;
  }

  .gallery-items {
    display: flex;
    padding: 0 7px 0 8px;
  }

  .tool {
    flex-direction: column;
    justify-content: flex-start;
    gap: 4px;
    width: 135px;
    padding: 10px 12px 0;
    white-space: pre-line;
  }

  .tool:disabled .icon {
    opacity: 0.35;
  }

  .gallery-more {
    width: 28px;
    border-left: 1px solid #bdbdbd;
    background: #f5f5f5;
    border-radius: 0 4px 4px 0;
  }

  .sim-form {
    display: flex;
    flex-direction: column;
    align-items: stretch;
    width: 198px;
    padding: 8px 4px 0 5px;
  }

  .sim-form .small {
    justify-content: flex-start;
    padding-left: 4px;
  }

  .stop-time {
    display: flex;
    align-items: center;
    justify-content: space-between;
    margin-bottom: 4px;
    padding-left: 4px;
  }

  .stop-time input {
    width: 96px;
    height: 33px;
    padding: 0 6px;
    box-sizing: border-box;
    border: 1px solid #777;
    background: #fff;
    color: #1a1a1a;
    font: inherit;
  }

  .mode {
    display: flex;
    align-items: center;
  }

  .mode select {
    width: 198px;
    height: 33px;
    padding: 0 6px;
    border: 1px solid #777;
    border-radius: 6px;
    background: #f5f5f5;
    color: #1a1a1a;
    font: inherit;
    appearance: none;
  }

  .mode .caret {
    margin-left: -26px;
    pointer-events: none;
  }

  .collapse {
    align-self: flex-end;
    margin: 0 10px 2px auto;
  }

  /* workspace */
  .workspace {
    display: flex;
    flex: 1;
    min-height: 0;
  }

  .rail {
    width: 35px;
    border: 0 solid #b8b8b8;
  }

  .rail.left {
    border-right-width: 2px;
  }

  .rail.right {
    width: 37px;
    border-left-width: 2px;
  }

  .rail button {
    width: 28px;
    height: 113px;
    margin: 1px;
    box-sizing: border-box;
    border: 1px solid #c8c8c8;
    background: #fff;
  }

  .rail.right button {
    margin: 2px 0 0 7px;
  }

  .rail span {
    white-space: nowrap;
    writing-mode: vertical-rl;
    text-orientation: sideways;
  }

  .rail.left span {
    transform: rotate(180deg);
  }

  .library {
    display: flex;
    flex-direction: column;
    width: 448px;
    padding: 0 4px 4px;
  }

  .library-head {
    display: flex;
    align-items: center;
    gap: 11px;
    height: 36px;
    padding: 0 4px 4px 5px;
  }

  h3 {
    flex: 1;
    font-size: 18px;
  }

  .search-row {
    display: flex;
    align-items: center;
    height: 34px;
    box-sizing: border-box;
    border: 1px solid #c8c8c8;
    border-width: 0 1px 1px 0;
    border-top: 1px solid #fff;
  }

  .combo {
    display: flex;
    align-items: center;
    flex: 1;
    height: 29px;
    padding-right: 7px;
    border-bottom: 1px solid #777;
    background: #fff;
  }

  .combo input {
    flex: 1;
    min-width: 0;
    border: none;
    background: none;
    padding: 3px 6px 0;
    font-family: "Liberation Mono", monospace;
    font-size: 14px;
  }

  .search-button {
    gap: 3px;
    height: 28px;
    margin: 0 28px 0 11px;
    padding: 0 3px 0 1px;
    border: 1px solid #bbb;
    border-radius: 4px;
    background: #fff;
  }

  .search-button i {
    width: 1px;
    height: 26px;
    background: #aaa;
  }

  .view {
    width: 28px;
    height: 28px;
    margin-right: 2px;
  }

  .library-tabs {
    display: flex;
    align-items: flex-end;
    height: 26px;
  }

  .library-tabs button {
    height: 24px;
    padding: 2px 15px 0 14px;
    border: 1px solid #e2e2e2;
    border-bottom: none;
    box-sizing: border-box;
  }

  .library-tabs .current {
    height: 26px;
    padding: 0 19px 0 16px;
    background: #fafafa;
  }

  .library-panel {
    display: flex;
    flex: 1;
    min-height: 0;
    padding: 14px 14px 15px 13px;
    border: 1px solid #e2e2e2;
    background: #fafafa;
  }

  .list {
    display: flex;
    flex: 1;
    border: 1px solid #000;
    background: #fff;
    overflow: hidden;
  }

  .blocks {
    display: flex;
    flex: 1;
    flex-direction: column;
    justify-content: flex-end;
    padding: 0 0 18px 48px;
  }

  .block {
    flex: none;
    flex-direction: column;
    justify-content: flex-start;
    width: 182px;
    height: 84px;
    padding-top: 10px;
    box-sizing: border-box;
    border: 1px solid transparent;
    color: #000;
    font-family: "Liberation Mono", monospace;
    font-size: 15px;
    line-height: 21px;
    white-space: pre-line;
  }

  .block.tall {
    height: 107px;
  }

  .block.selected {
    border-color: #b4d0ea;
    background: #dae8f5;
  }

  .block span {
    margin-top: 9px;
  }

  .block text {
    fill: #000;
    stroke: none;
    font-family: "Liberation Sans", sans-serif;
    text-anchor: middle;
  }

  .block .math {
    font-family: "Liberation Serif", serif;
    font-style: italic;
  }

  .vscroll {
    width: 25px;
    background: #f0f0f0;
  }

  .vthumb {
    width: 5px;
    height: 14%;
    margin: 678px auto 0;
    border-radius: 3px;
    background: #868686;
  }

  /* editor */
  .editor {
    display: flex;
    flex: 1;
    flex-direction: column;
    min-width: 0;
    margin-left: 9px;
  }

  .nav-row {
    display: flex;
    align-items: center;
    gap: 21px;
    height: 28px;
    padding: 0 12px 0 9px;
    border-bottom: 2px solid #9a9ca4;
  }

  .file-tab {
    align-self: flex-end;
    width: 49px;
    height: 27px;
    margin-left: -10px;
    border: 1px solid #ddd;
    border-bottom: none;
    box-sizing: border-box;
    background: #fff;
    font-size: 17px;
  }

  .keyboard {
    margin-left: auto;
  }

  .editor-row {
    display: flex;
    flex: 1;
    min-height: 0;
  }

  .palette {
    display: flex;
    flex-direction: column;
    width: 49px;
    padding-bottom: 3px;
  }

  .palette button {
    height: 42px;
  }

  .palette .first {
    height: 44px;
  }

  .palette hr {
    width: 28px;
    margin: 5px auto 7px;
    border: 0;
    border-top: 1px solid #aaa;
    border-bottom: 1px solid #fff;
  }

  .spacer {
    flex: 1;
  }

  .sheet {
    position: relative;
    display: flex;
    flex: 1;
    flex-direction: column;
    min-width: 0;
    margin: 0 1px 1px 0;
    border: 1px solid #858a96;
    border-top: none;
  }

  .crumb {
    padding: 2px 2px 4px;
    border-bottom: 2px solid #858a96;
    background: #f0f0f0;
  }

  .crumb-inner {
    display: flex;
    align-items: center;
    gap: 4px;
    height: 37px;
    padding: 0 7px 0 0;
    background: #fff;
    color: #000;
    font-size: 20px;
  }

  .crumb .caret {
    margin-left: auto;
  }

  .canvas {
    position: relative;
    flex: 1;
    min-height: 0;
    background: #fff;
    overflow: hidden;
  }

  .node {
    fill: #fff;
    stroke-width: 2;
    filter: drop-shadow(3px 4px 2px rgba(0, 0, 0, 0.35));
  }

  .label {
    fill: #000;
    stroke: none;
    font-family: "Liberation Sans", sans-serif;
    font-size: 37px;
    text-anchor: middle;
  }

  .formula {
    stroke: #000;
    stroke-width: 0.6;
    font-family: "Liberation Serif", serif;
    font-size: 38px;
  }

  .grips {
    position: absolute;
    right: 2px;
    bottom: 3px;
    display: flex;
    gap: 2px;
  }

  .grips i {
    width: 6px;
    height: 15px;
    background: #f5f5f5;
  }

  .grips i:last-child {
    width: 14px;
  }

  .hscroll {
    padding: 10px 26px 10px 37px;
    background: #f0f0f0;
  }

  .hthumb {
    height: 5px;
    border-radius: 3px;
    background: #868686;
  }

  /* floating scope window */
  .scope {
    position: absolute;
    z-index: 2;
    left: 690px;
    top: 507px;
    width: 841px;
    border: 2px solid #ababab;
    border-radius: 13px;
    background: #f0f0f0;
    box-shadow: 0 16px 50px rgba(0, 0, 0, 0.4);
    color: #000;
    overflow: hidden;
  }

  .titlebar {
    display: flex;
    align-items: center;
    height: 43px;
    padding-left: 12px;
    background: #eff3fa;
    font-size: 17px;
  }

  .titlebar span {
    flex: 1;
    margin-left: 9px;
  }

  .titlebar button {
    width: 70px;
    height: 43px;
  }

  .menubar {
    display: flex;
    align-items: center;
    height: 33px;
    padding-left: 8px;
    background: #fff;
  }

  .menubar button {
    margin-right: 19px;
  }

  .dock {
    margin: 0 6px 0 auto;
  }

  .toolbar {
    display: flex;
    align-items: center;
    gap: 7px;
    height: 38px;
    padding-left: 7px;
    border-top: 1px solid #a0a0a0;
    border-bottom: 2px solid #b5b5b5;
  }

  .toolbar i {
    width: 1px;
    height: 34px;
    margin: 0 1px;
    background: #aaa;
  }

  .toolbar button {
    min-width: 26px;
    gap: 10px;
  }

  .toolbar .caret {
    width: 8px;
    height: 5px;
  }

  .figure {
    background: #282828;
  }

  .figure text {
    fill: #b0b0b0;
    font-family: "Liberation Sans", sans-serif;
    font-size: 16px;
  }

  .scope-status {
    display: flex;
    align-items: center;
    gap: 4px;
    height: 35px;
    padding-right: 4px;
    border-top: 1px solid #a0a0a0;
    font-size: 16px;
  }

  .scope-status span:first-child {
    flex: 1;
  }

  .cell {
    padding: 0 7px 0 2px;
    border: 1px solid #fff;
    border-top-color: #a8a8a8;
    border-left-color: #a8a8a8;
  }

  /* status bar */
  footer {
    display: grid;
    grid-template-columns: 1fr 1fr;
    align-items: center;
    height: 34px;
    padding: 0 8px 0 6px;
    color: #000;
  }

  .solver {
    display: flex;
    justify-content: space-between;
    padding-left: 17px;
    font-size: 19px;
  }

  footer a {
    position: relative;
    z-index: 4;
    color: #000080;
    text-decoration: none;
  }

  .watermark {
    position: absolute;
    z-index: 3;
    right: 2px;
    bottom: 18px;
    color: rgba(228, 228, 228, 0.9);
    font-family: "Noto Sans CJK SC", sans-serif;
    font-size: 51px;
    font-weight: 300;
    line-height: 60px;
    text-shadow: 1px 1px 1px #888;
    pointer-events: none;
  }
</style>
